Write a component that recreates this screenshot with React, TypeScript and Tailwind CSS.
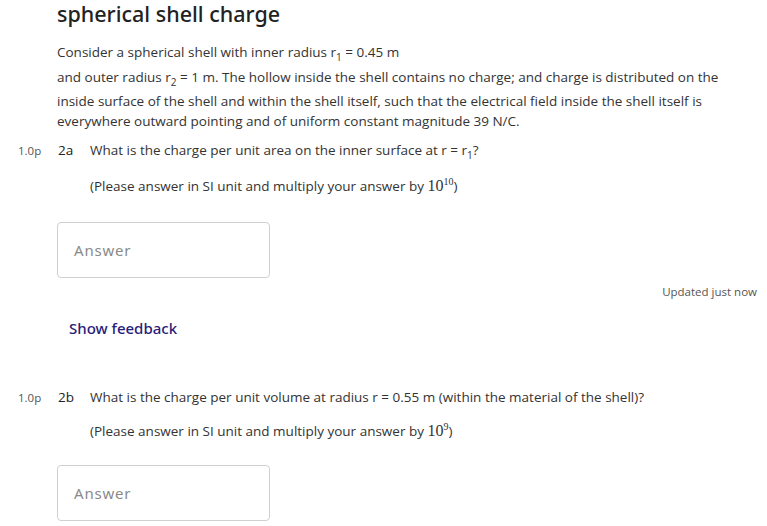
const body = { fontFamily: "'Open Sans', 'Noto Sans', sans-serif" };
const head = { fontFamily: "'Noto Sans', 'Open Sans', sans-serif" };
const math = { fontFamily: "'Liberation Serif', 'DejaVu Serif', serif" };

const Sub = ({ children }: { children: string }) => (
	<span className="align-[-4px] text-[10px] leading-[18px]">{children}</span>
);

const Power = ({ exp }: { exp: string }) => (
	<span style={math} className="text-[16px]">
		10<span className="relative -top-[6px] text-[10px] leading-none">{exp}</span>
	</span>
);

const AnswerBox = () => (
	<div className="ml-[57px] h-[56px] w-[213px] rounded-[4px] border border-[#d0d0d0] flex items-center px-4">
		<span style={head} className="text-[15px] tracking-[0.8px] text-[#8a8a8a]">
			Answer
		</span>
	</div>
);

const QuestionRow = ({
	label,
	children,
}: {
	label: string;
	children: React.ReactNode;
}) => (
	<div className="flex items-baseline">
		<span className="w-[58px] pl-[18px] text-[11.5px] text-[#555]">1.0p</span>
		<span className="w-[32px] text-[13.5px] text-[#222]">{label}</span>
		<span className="text-[13.5px] text-[#333]">{children}</span>
	</div>
);

export default function App() {
	return (
		<div style={body} className="w-[767px] h-[526px] overflow-hidden bg-white text-[#333]">
			<h1 style={head} className="pl-[57px] text-[21.5px] leading-[28px] font-medium text-[#222]">
				spherical shell charge
			</h1>
			<div className="pl-[57px] pr-[30px] pt-[14px] text-[13.5px] leading-[20px]">
				<p>
					Consider a spherical shell with inner radius r<Sub>1</Sub> = 0.45 m
				</p>
				<p className="mt-[1px]">
					and outer radius r<Sub>2</Sub> = 1 m. The hollow inside the shell contains no charge; and
					charge is distributed on the inside surface of the shell and within the shell itself, such
					that the electrical field inside the shell itself is everywhere outward pointing and of
					uniform constant magnitude 39 N/C.
				</p>
			</div>

			<div className="mt-[9px]">
				<QuestionRow label="2a">
					What is the charge per unit area on the inner surface at r = r<Sub>1</Sub>?
				</QuestionRow>
				<p className="pl-[90px] mt-[10px] text-[13.5px] text-[#333]">
					(Please answer in SI unit and multiply your answer by <Power exp="10" />)
				</p>
				<div className="mt-[24px]">
					<AnswerBox />
				</div>
				<div className="flex justify-end pr-[10px] mt-[5px]">
					<span className="text-[11.5px] text-[#555]">Updated just now</span>
				</div>
				<div style={head} className="pl-[69px] mt-[17px] text-[15px] text-[#27207a] font-medium">
					Show feedback
				</div>
			</div>

			<div className="mt-[47px]">
				<QuestionRow label="2b">
					What is the charge per unit volume at radius r = 0.55 m (within the material of the shell)?
				</QuestionRow>
				<p className="pl-[90px] mt-[12px] text-[13.5px] text-[#333]">
					(Please answer in SI unit and multiply your answer by <Power exp="9" />)
				</p>
				<div className="mt-[22px]">
					<AnswerBox />
				</div>
			</div>
		</div>
	);
}
